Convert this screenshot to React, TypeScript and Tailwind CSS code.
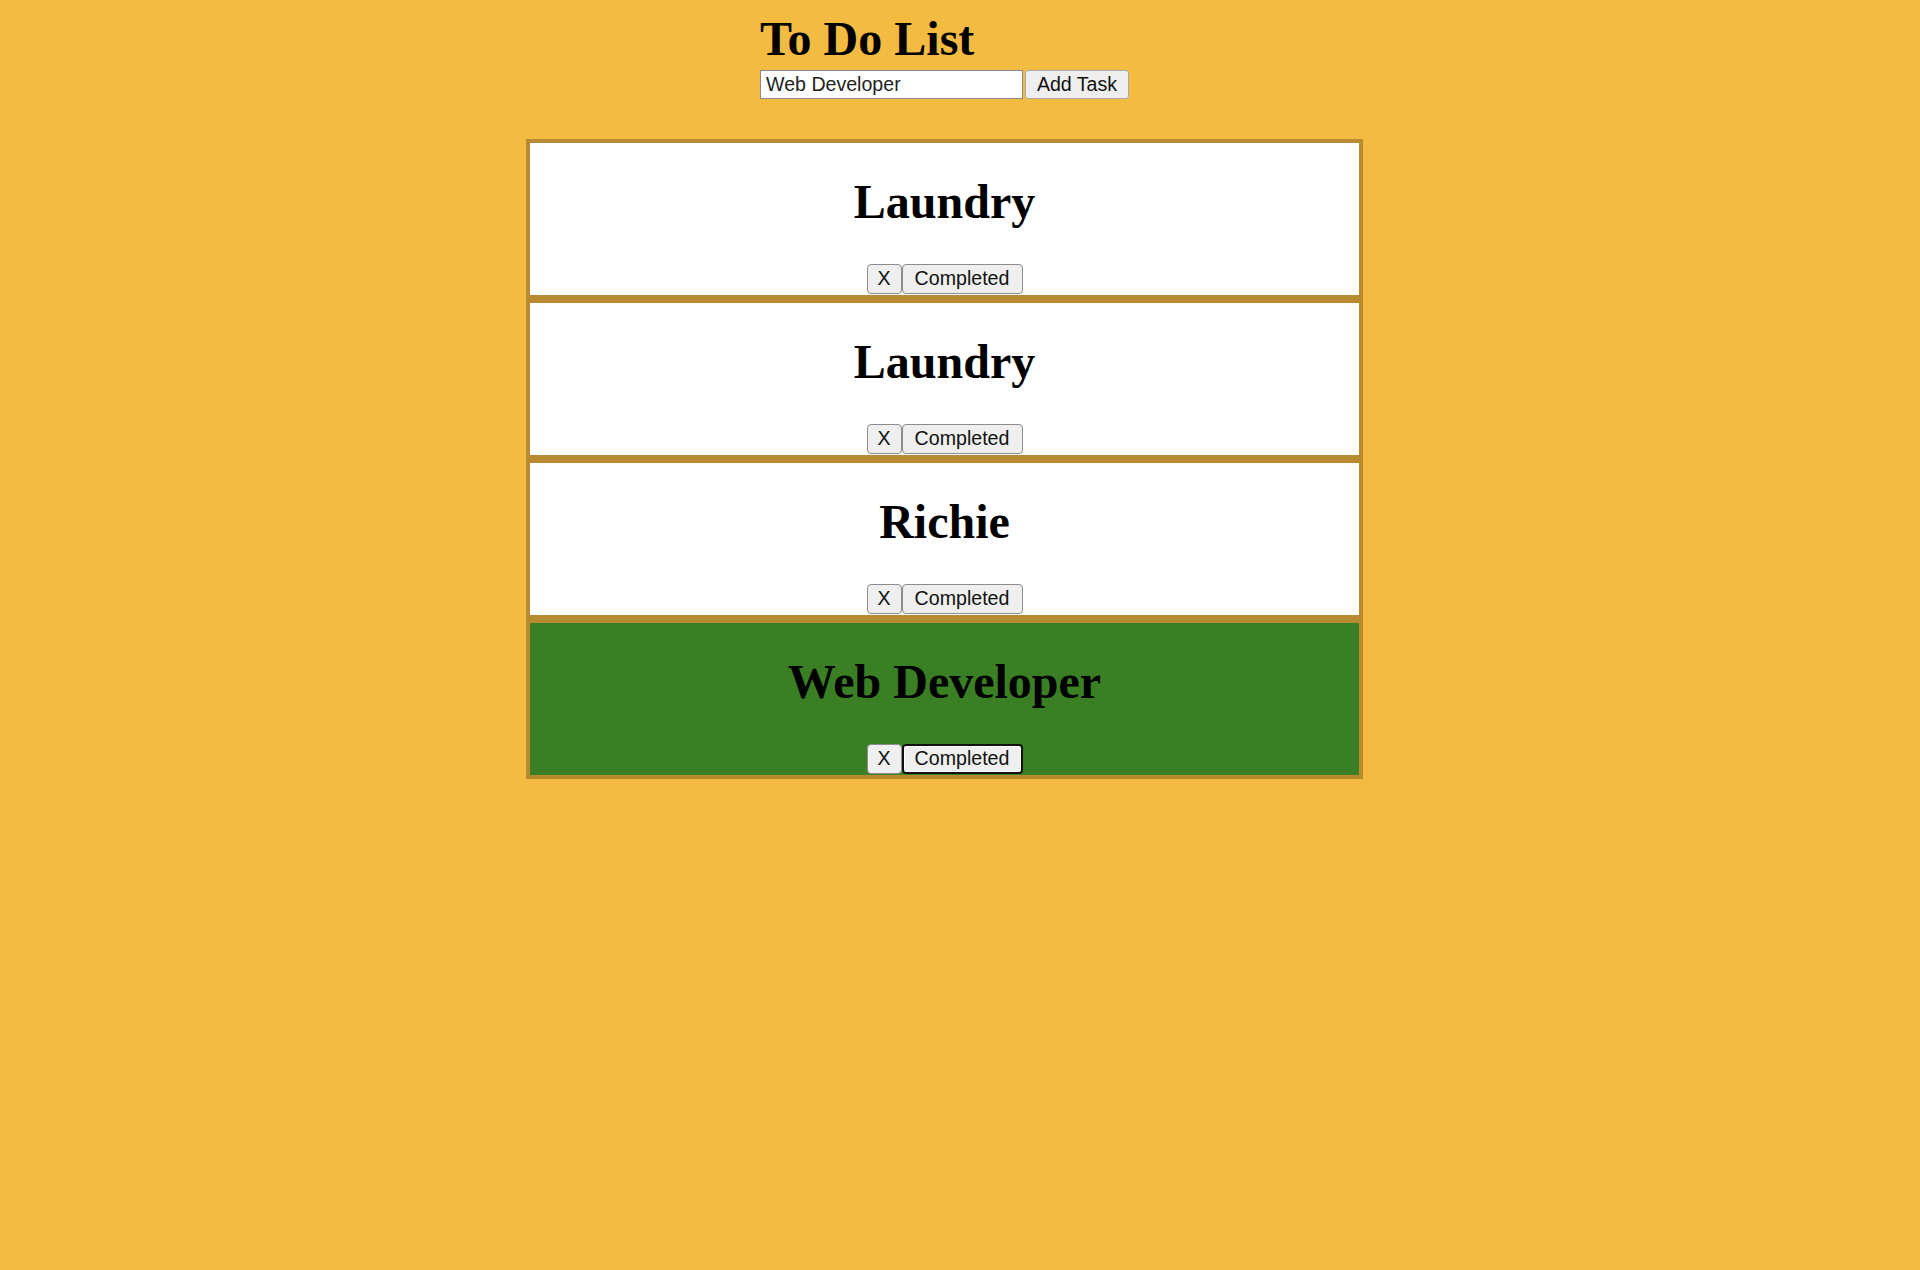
import { useState } from "react";

interface Task {
  id: number;
  name: string;
  completed: boolean;
}

const initialTasks: Task[] = [
  { id: 1, name: "Laundry", completed: false },
  { id: 2, name: "Laundry", completed: false },
  { id: 3, name: "Richie", completed: false },
  { id: 4, name: "Web Developer", completed: true },
];

const btn =
  "h-[30px] px-[8px] bg-[#efefef] border border-[#8d8d8d] rounded-[4px] text-[19.6px] leading-none text-[#111] font-['Liberation_Sans',Arial,sans-serif]";

export default function App() {
  const [tasks, setTasks] = useState<Task[]>(initialTasks);
  const [newTask, setNewTask] = useState("Web Developer");

  const addTask = () => {
    if (!newTask.trim()) return;
    setTasks([...tasks, { id: Date.now(), name: newTask, completed: false }]);
  };

  const removeTask = (id: number) => setTasks(tasks.filter((t) => t.id !== id));

  const toggleTask = (id: number) =>
    setTasks(tasks.map((t) => (t.id === id ? { ...t, completed: !t.completed } : t)));

  return (
    <div className="min-h-[1270px] w-full bg-[#f3bb41] pr-[31px] flex flex-col items-center">
      <div className="w-[369px] pt-[12px]">
        <h1 className="m-0 text-[48px] leading-[54px] font-bold text-black font-['Liberation_Serif','Times_New_Roman',serif]">
          To Do List
        </h1>
        <div className="mt-[4px] flex gap-[2px]">
          <input
            value={newTask}
            onChange={(e) => setNewTask(e.target.value)}
            className="h-[29px] w-[263px] bg-white border border-[#8a8a8a] px-[5px] text-[19.6px] text-[#222] outline-none font-['Liberation_Sans',Arial,sans-serif]"
          />
          <button
            onClick={addTask}
            className="h-[29px] w-[104px] bg-[#efefef] border border-[#a8a8a8] rounded-[3px] text-[19.6px] leading-none text-[#111] font-['Liberation_Sans',Arial,sans-serif]"
          >
            Add Task
          </button>
        </div>
      </div>

      <div className="mt-[40px] w-[837px] flex flex-col">
        {tasks.map((task) => (
          <div
            key={task.id}
            className={`h-[160px] border-4 border-[#b88b30] flex flex-col items-center ${
              task.completed ? "bg-[#3a7f24]" : "bg-white"
            }`}
          >
            <h1 className="mt-[32px] text-[48px] leading-[54px] font-bold text-black font-['Liberation_Serif','Times_New_Roman',serif]">
              {task.name}
            </h1>
            <div className="mt-auto mb-[1px] flex">
              <button onClick={() => removeTask(task.id)} className={`${btn} w-[35px]`}>
                X
              </button>
              <button
                onClick={() => toggleTask(task.id)}
                className={`${btn} w-[121px] ${
                  task.completed ? "border-2 border-[#111] shadow-[inset_0_0_0_1px_#fff]" : ""
                }`}
              >
                Completed
              </button>
            </div>
          </div>
        ))}
      </div>
    </div>
  );
}
